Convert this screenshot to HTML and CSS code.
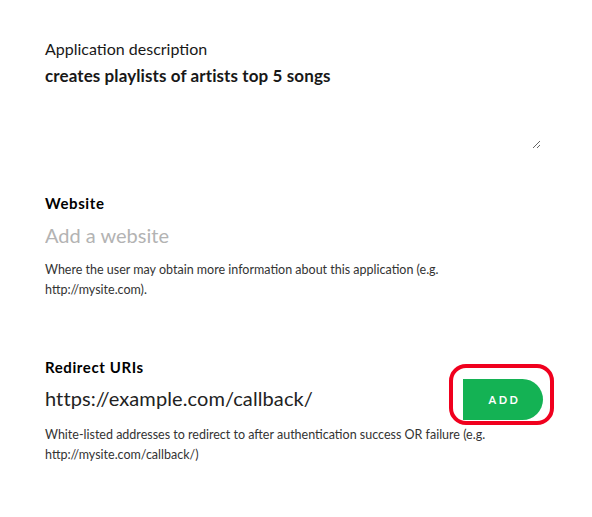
FILE: index.html
```html
<!DOCTYPE html>
<html>
<head>
<meta charset="utf-8">
<link rel="stylesheet" href="styles.css">
</head>
<body>
<form class="form">
  <div class="field field-desc">
    <label class="label-light" for="desc">Application description</label>
    <textarea id="desc" class="textarea">creates playlists of artists top 5 songs</textarea>
  </div>
  <div class="field field-website">
    <label class="label-bold" for="site">Website</label>
    <input id="site" class="text-input" type="text" placeholder="Add a website">
    <p class="help">Where the user may obtain more information about this application (e.g. http://mysite.com).</p>
  </div>
  <div class="field field-redirect">
    <label class="label-bold" for="uri">Redirect URIs</label>
    <div class="uri-row">
      <input id="uri" class="text-input uri-input" type="text" value="https://example.com/callback/">
      <span class="highlight"><button type="button" class="btn-add">ADD</button></span>
    </div>
    <p class="help help-tight">White-listed addresses to redirect to after authentication success OR failure (e.g. http://mysite.com/callback/)</p>
  </div>
</form>
</body>
</html>
```

FILE: styles.css
```css
html, body {
  margin: 0;
  padding: 0;
  background: #ffffff;
}
body {
  font-family: "Lato", "Liberation Sans", sans-serif;
  color: #181818;
}
.form {
  width: 509px;
  padding: 39px 0 0 45px;
  display: flex;
  flex-direction: column;
}
.field {
  display: flex;
  flex-direction: column;
}
.label-light {
  font-size: 16px;
  line-height: 20px;
  color: #181818;
}
.label-bold {
  font-size: 15px;
  font-weight: 700;
  letter-spacing: 0.6px;
  line-height: 20px;
  color: #000;
}
.textarea {
  margin: 6px 0 0 0;
  padding: 0;
  border: none;
  outline: none;
  width: 496px;
  height: 84px;
  resize: vertical;
  font-family: inherit;
  font-size: 17px;
  font-weight: 700;
  letter-spacing: 0.1px;
  line-height: 22px;
  color: #181818;
}
.field-website {
  margin-top: 44px;
}
.text-input {
  margin: 9px 0 0 0;
  padding: 0;
  border: none;
  outline: none;
  font-family: inherit;
  font-size: 20px;
  line-height: 26px;
  height: 26px;
  color: #222;
}
.text-input::placeholder {
  color: #b3b3b3;
}
.help {
  margin: 12px 0 0 0;
  max-width: 480px;
  font-size: 12.5px;
  line-height: 20px;
  color: #333;
}
.field-redirect {
  margin-top: 57px;
}
.uri-row {
  display: flex;
  align-items: flex-start;
  justify-content: space-between;
}
.uri-input {
  flex: 1;
  margin: 8px 0 0 0;
  letter-spacing: 0.1px;
}
.highlight {
  display: inline-flex;
  margin-top: -13px;
  border: 4px solid #f0001e;
  border-radius: 17px;
  padding: 11px 7px 1px 10px;
}
.btn-add {
  width: 80px;
  height: 41px;
  border: none;
  border-radius: 0 21px 21px 0;
  background: #14b254;
  color: #fff;
  font-family: inherit;
  font-size: 11px;
  font-weight: 700;
  letter-spacing: 2.5px;
  padding: 0 0 0 3px;
}
.help-tight {
  margin-top: 0;
}
```
